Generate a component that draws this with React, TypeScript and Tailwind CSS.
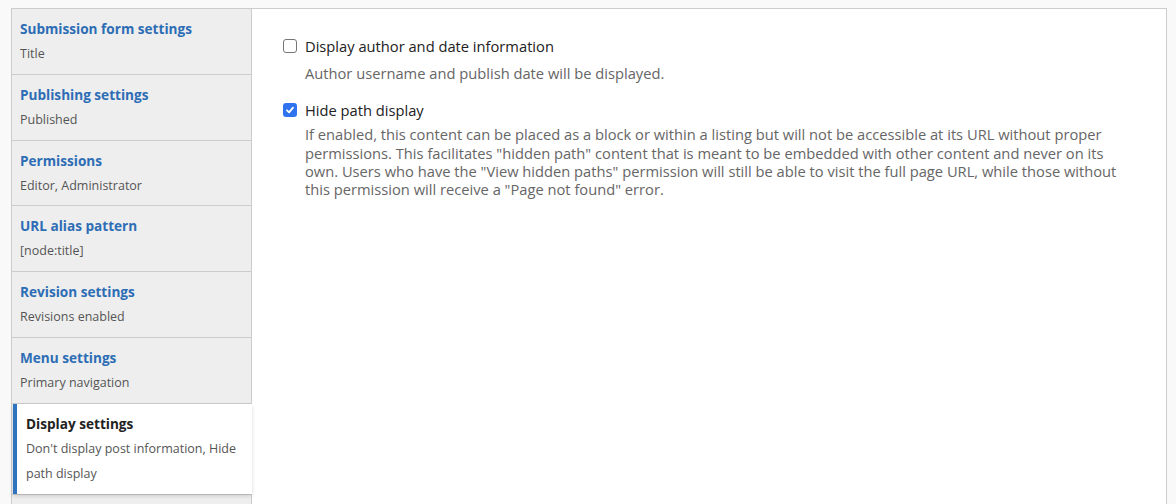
import React from "react";

const tabs = [
  { title: "Submission form settings", summary: "Title" },
  { title: "Publishing settings", summary: "Published" },
  { title: "Permissions", summary: "Editor, Administrator" },
  { title: "URL alias pattern", summary: "[node:title]" },
  { title: "Revision settings", summary: "Revisions enabled" },
  { title: "Menu settings", summary: "Primary navigation" },
];

function Checkbox({ checked }: { checked?: boolean }) {
  if (checked) {
    return (
      <span className="mt-[3px] flex h-[14px] w-[14px] shrink-0 items-center justify-center rounded-[3px] bg-[#2f74ee]">
        <svg width="10" height="10" viewBox="0 0 10 10">
          <path d="M2 5.3 L4.1 7.4 L8 2.6" fill="none" stroke="#fff" strokeWidth="1.8" strokeLinecap="round" strokeLinejoin="round" />
        </svg>
      </span>
    );
  }
  return <span className="mt-[3px] h-[14px] w-[14px] shrink-0 rounded-[3px] border border-[#767676] bg-white" />;
}

export default function App() {
  return (
    <div className="min-h-[504px] bg-[#f9f9f9] pt-[8px] pl-[11px] pr-[9px] font-['Open_Sans',sans-serif]">
      <div className="flex h-[520px] border border-[#cccccc] bg-white">
        <div className="flex w-[240px] shrink-0 flex-col border-r border-[#cccccc] bg-[#eeeeee]">
          {tabs.map((t, i) => (
            <div
              key={t.title}
              className={
                i === 2
                  ? "border-b border-[#cccccc] pl-[8px] pt-[10px] pb-[7px]"
                  : "border-b border-[#cccccc] pl-[8px] pt-[10px] pb-[8px]"
              }
            >
              <div className="text-[13.6px] font-bold leading-[20px] text-[#2d6db5]">{t.title}</div>
              <div className="mt-[2px] text-[12.5px] leading-[25px] text-[#555555]">{t.summary}</div>
            </div>
          ))}
          <div className="relative z-10 -mr-[1px] ml-[1px] border-l-4 border-[#2f72bd] bg-white pl-[9px] pr-[8px] pt-[10px] pb-[8px] shadow-[0_2px_4px_rgba(0,0,0,0.15)]">
            <div className="text-[13.6px] font-bold leading-[20px] text-[#222222]">Display settings</div>
            <div className="mt-[2px] text-[12.5px] leading-[25px] text-[#555555]">Don't display post information, Hide path display</div>
          </div>
          <div className="flex-1 border-t border-[#cccccc]" />
        </div>
        <div className="flex-1 px-[31px] pt-[27px]">
          <div className="flex gap-[8px]">
            <Checkbox />
            <div>
              <div className="text-[14.7px] leading-[20px] text-[#222222]">Display author and date information</div>
              <div className="mt-[8px] text-[14.7px] leading-[18.4px] text-[#666666]">Author username and publish date will be displayed.</div>
            </div>
          </div>
          <div className="mt-[18px] flex gap-[8px]">
            <Checkbox checked />
            <div>
              <div className="text-[14.7px] leading-[20px] text-[#222222]">Hide path display</div>
              <div className="mt-[5px] text-[14.7px] leading-[18.3px] text-[#666666]">
                If enabled, this content can be placed as a block or within a listing but will not be accessible at its URL without proper permissions. This facilitates "hidden path" content that is meant to be embedded with other content and never on its own. Users who have the "View hidden paths" permission will still be able to visit the full page URL, while those without this permission will receive a "Page not found" error.
              </div>
            </div>
          </div>
        </div>
      </div>
    </div>
  );
}
